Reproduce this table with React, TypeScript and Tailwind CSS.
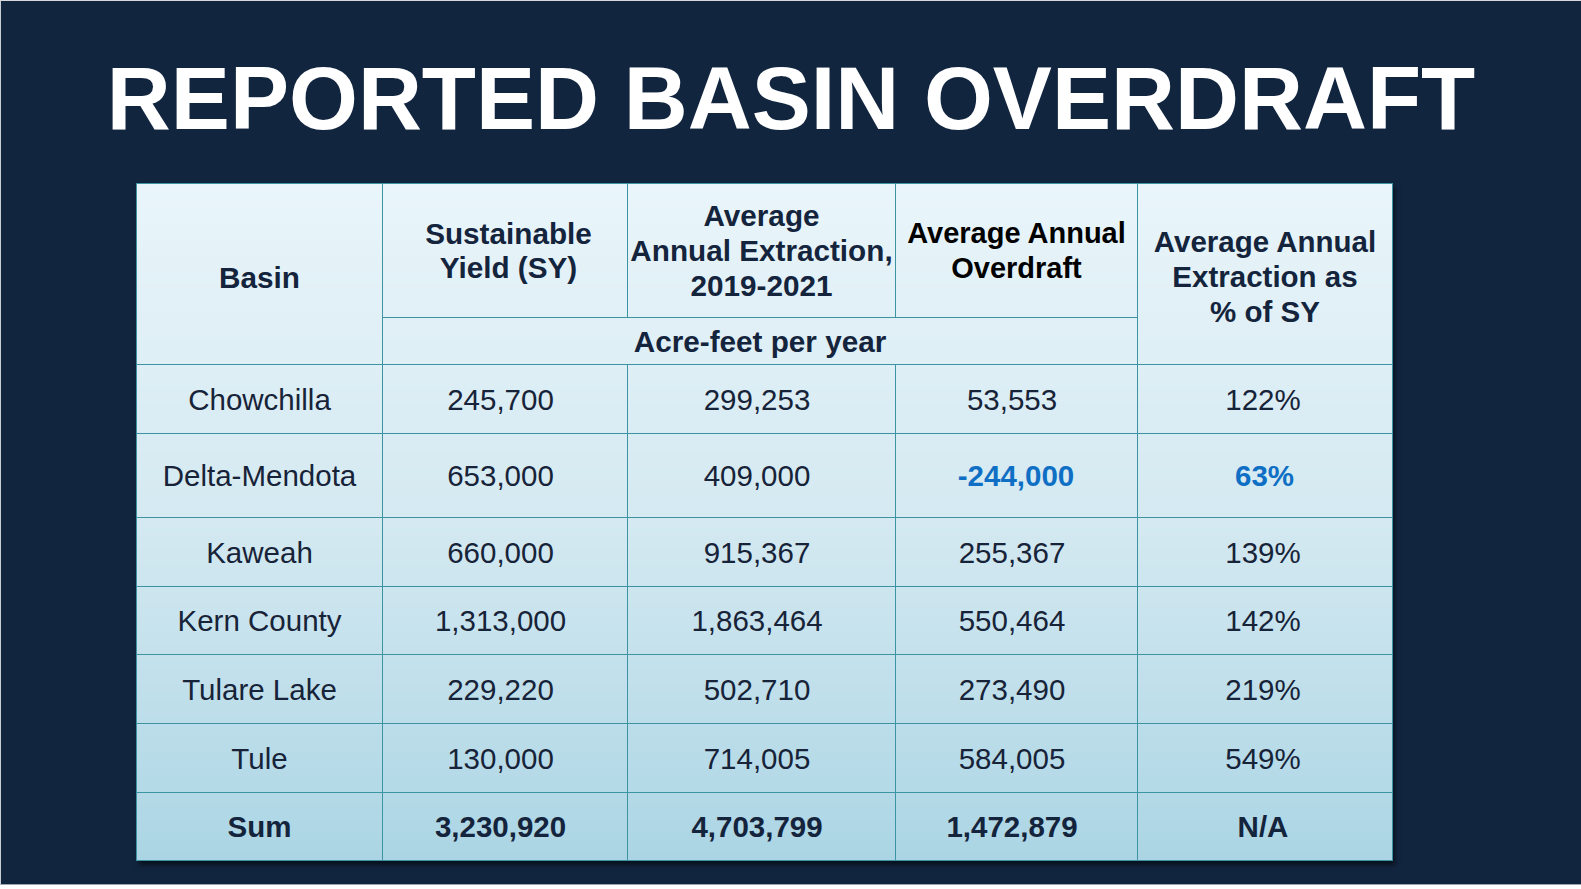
import React from 'react';

type Row = {
  basin: string;
  sy: string;
  extraction: string;
  overdraft: string;
  pct: string;
  h: string;
  highlight?: boolean;
  bold?: boolean;
};

const rows: Row[] = [
  { basin: 'Chowchilla', sy: '245,700', extraction: '299,253', overdraft: '53,553', pct: '122%', h: 'h-[69px]' },
  { basin: 'Delta-Mendota', sy: '653,000', extraction: '409,000', overdraft: '-244,000', pct: '63%', h: 'h-[84px]', highlight: true },
  { basin: 'Kaweah', sy: '660,000', extraction: '915,367', overdraft: '255,367', pct: '139%', h: 'h-[69px]' },
  { basin: 'Kern County', sy: '1,313,000', extraction: '1,863,464', overdraft: '550,464', pct: '142%', h: 'h-[68px]' },
  { basin: 'Tulare Lake', sy: '229,220', extraction: '502,710', overdraft: '273,490', pct: '219%', h: 'h-[69px]' },
  { basin: 'Tule', sy: '130,000', extraction: '714,005', overdraft: '584,005', pct: '549%', h: 'h-[69px]' },
  { basin: 'Sum', sy: '3,230,920', extraction: '4,703,799', overdraft: '1,472,879', pct: 'N/A', h: 'h-[68px]', bold: true },
];

const cell = 'border border-[#3c93a2] text-center align-middle p-0';

export default function App() {
  return (
    <div className="w-[1581px] h-[889px] bg-white font-['Liberation_Sans',Arial,sans-serif]">
      <div className="h-[885px] border-t border-l border-b border-t-[#d6d8db] border-l-[#c9ced4] border-b-[#9aa6b4] bg-[#12253f] flex flex-col">
        <h1 className="mt-[54px] h-[88px] leading-[88px] text-[88.6px] font-bold text-white text-center whitespace-nowrap">
          REPORTED BASIN OVERDRAFT
        </h1>

        <div className="mt-[40px] ml-[135px] w-[1256px] shadow-[3px_4px_5px_rgba(0,0,0,0.55)]">
          <table className="w-full border-collapse table-fixed bg-linear-to-b from-[#e9f5fa] via-[#d4e9f1] to-[#abd5e4] text-[29.5px] leading-[35px] text-[#172338]">
            <colgroup>
              <col className="w-[246px]" />
              <col className="w-[245px]" />
              <col className="w-[268px]" />
              <col className="w-[242px]" />
              <col className="w-[255px]" />
            </colgroup>
            <thead className="text-[29.7px]">
              <tr className="h-[134px]">
                <th rowSpan={2} className={`${cell} font-bold text-[#14243c] pt-[6px]`}>Basin</th>
                <th className={`${cell} font-bold text-[#14243c] leading-[34px] whitespace-nowrap pl-[7px]`}>
                  Sustainable
                  <br />
                  Yield (SY)
                </th>
                <th className={`${cell} font-bold text-[#14243c] whitespace-nowrap`}>
                  Average
                  <br />
                  Annual Extraction,
                  <br />
                  2019-2021
                </th>
                <th className={`${cell} font-bold text-black whitespace-nowrap text-[29px]`}>
                  Average Annual
                  <br />
                  Overdraft
                </th>
                <th rowSpan={2} className={`${cell} font-bold text-[#14243c] whitespace-nowrap pt-[4px] text-[29.5px]`}>
                  Average Annual
                  <br />
                  Extraction as
                  <br />% of SY
                </th>
              </tr>
              <tr className="h-[47px]">
                <th colSpan={3} className={`${cell} font-bold text-[#14243c]`}>Acre-feet per year</th>
              </tr>
            </thead>
            <tbody>
              {rows.map((r) => (
                <tr key={r.basin} className={`${r.h} ${r.bold ? 'font-bold text-[#14243c]' : ''}`}>
                  <td className={cell}>{r.basin}</td>
                  <td className={`${cell} pr-[9px]`}>{r.sy}</td>
                  <td className={`${cell} pr-[9px]`}>{r.extraction}</td>
                  <td className={`${cell} ${r.highlight ? 'font-bold text-[#0f6fc4] pr-px' : 'pr-[9px]'}`}>{r.overdraft}</td>
                  <td className={`${cell} ${r.highlight ? 'font-bold text-[#0f6fc4] pr-px' : 'pr-[4px]'}`}>{r.pct}</td>
                </tr>
              ))}
            </tbody>
          </table>
        </div>
      </div>
    </div>
  );
}
